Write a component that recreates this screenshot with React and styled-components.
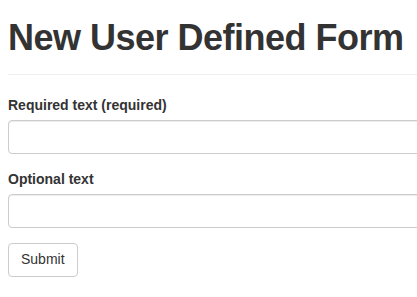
import React from "react";
import styled, { createGlobalStyle } from "styled-components";

const GlobalStyle = createGlobalStyle`
  html, body {
    margin: 0;
    padding: 0;
    overflow: hidden;
    background: #fff;
  }
  body {
    font-family: "Liberation Sans", Arial, sans-serif;
    font-size: 14px;
    line-height: 1.42857;
    color: #333;
  }
`;

const Page = styled.div`
  width: 460px;
  padding: 0 8px;
`;

const PageHeader = styled.div`
  margin: 18px 0 20px;
  padding-bottom: 16px;
  border-bottom: 1px solid #eee;
`;

const Title = styled.h1`
  margin: 0;
  font-size: 36px;
  font-weight: 700;
  line-height: 1.1;
  letter-spacing: -0.5px;
  color: #333;
`;

const Form = styled.form`
  display: flex;
  flex-direction: column;
  align-items: flex-start;
`;

const FormGroup = styled.div`
  width: 100%;
  margin-bottom: 15px;
`;

const Label = styled.label`
  display: block;
  margin-bottom: 5px;
  font-weight: 700;
  line-height: 20px;
`;

const Input = styled.input`
  display: block;
  box-sizing: border-box;
  width: 100%;
  height: 34px;
  padding: 6px 12px;
  font: inherit;
  color: #555;
  background: #fff;
  border: 1px solid #ccc;
  border-radius: 4px;
  box-shadow: inset 0 1px 1px rgba(0, 0, 0, 0.075);
  outline: none;
`;

const Button = styled.button`
  box-sizing: border-box;
  height: 34px;
  padding: 6px 12px;
  font: inherit;
  color: #333;
  background: #fff;
  border: 1px solid #ccc;
  border-radius: 4px;
  cursor: pointer;
`;

const fields = [
  { id: "required_text", label: "Required text (required)" },
  { id: "optional_text", label: "Optional text" },
];

export default function App() {
  return (
    <Page>
      <GlobalStyle />
      <PageHeader>
        <Title>New User Defined Form</Title>
      </PageHeader>
      <Form onSubmit={(e) => e.preventDefault()}>
        {fields.map((f) => (
          <FormGroup key={f.id}>
            <Label htmlFor={f.id}>{f.label}</Label>
            <Input id={f.id} type="text" />
          </FormGroup>
        ))}
        <Button type="submit">Submit</Button>
      </Form>
    </Page>
  );
}
